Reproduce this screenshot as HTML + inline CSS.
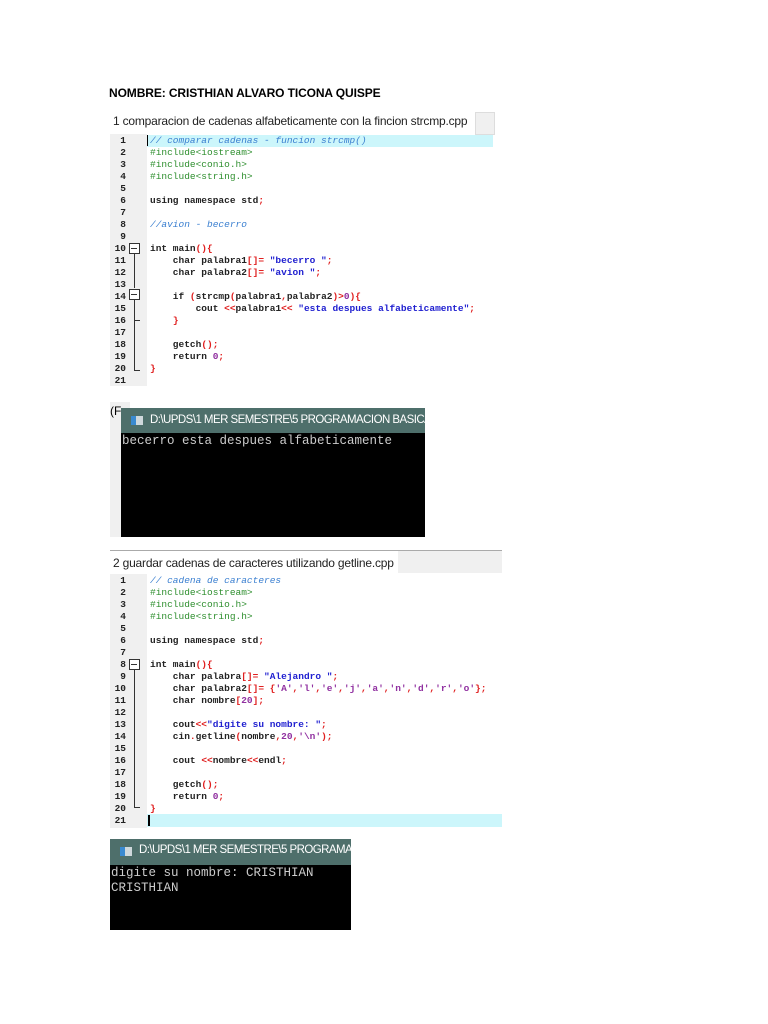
<!DOCTYPE html>
<html><head><meta charset="utf-8"><style>
body{margin:0;background:#fff;width:768px;height:1024px;position:relative;overflow:hidden;font-family:"Liberation Sans",sans-serif}
.a{position:absolute;white-space:pre}
.code{font-family:"Liberation Mono",monospace;font-size:9.5px;font-weight:bold;color:#222;line-height:12px}
.ln{font-family:"Liberation Mono",monospace;font-size:9.5px;font-weight:bold;color:#222;line-height:12px;text-align:right;width:16px}
.c{color:#3a7fd0;font-style:italic;font-weight:normal}
.p{color:#2f8f2f;font-weight:normal}
.s{color:#2020d0}
.r{color:#e02020}
.n{color:#9030a0}
.term{font-family:"Liberation Mono",monospace;color:#ccc;font-size:12.5px}
.tt{color:#fff;font-size:11.5px;letter-spacing:-0.55px}
.h{font-size:12px;letter-spacing:-0.2px;color:#222}
</style></head><body>
<div class="a" style="left:109px;top:86px;font-size:12px;font-weight:bold;letter-spacing:-0.1px">NOMBRE: CRISTHIAN ALVARO TICONA QUISPE</div>

<div class="a" style="left:475px;top:112px;width:18px;height:21px;background:#f0f0f0;border:1px solid #ddd"></div>
<div class="a h" style="left:113px;top:114px">1 comparacion de cadenas alfabeticamente con la fincion strcmp.cpp</div>
<div class="a" style="left:110px;top:134px;width:37px;height:252px;background:#f0f0f0"></div>
<div class="a" style="left:147px;top:135px;width:346px;height:12px;background:#ccf6fb"></div>
<div class="a" style="left:147px;top:135px;width:1px;height:11px;background:#000"></div>
<div class="a ln" style="left:110px;top:135px">1
2
3
4
5
6
7
8
9
10
11
12
13
14
15
16
17
18
19
20
21</div>
<div class="a" style="left:129px;top:243px;width:9px;height:9px;border:1px solid #333;background:#fff"></div>
<div class="a" style="left:131px;top:248px;width:6px;height:1px;background:#333"></div>
<div class="a" style="left:129px;top:289px;width:9px;height:9px;border:1px solid #333;background:#fff"></div>
<div class="a" style="left:131px;top:294px;width:6px;height:1px;background:#333"></div>
<div class="a" style="left:134px;top:254px;width:1px;height:34px;background:#333"></div>
<div class="a" style="left:134px;top:300px;width:1px;height:70px;background:#333"></div>
<div class="a" style="left:134px;top:320px;width:6px;height:1px;background:#333"></div>
<div class="a" style="left:134px;top:370px;width:6px;height:1px;background:#333"></div>
<div class="a code" style="left:150px;top:135px"><span class="c">// comparar cadenas - funcion strcmp()</span>
<span class="p">#include&lt;iostream&gt;</span>
<span class="p">#include&lt;conio.h&gt;</span>
<span class="p">#include&lt;string.h&gt;</span>

using namespace std<span class="r">;</span>

<span class="c">//avion - becerro</span>

int main<span class="r">(){</span>
    char palabra1<span class="r">[]=</span> <span class="s">"becerro "</span><span class="r">;</span>
    char palabra2<span class="r">[]=</span> <span class="s">"avion "</span><span class="r">;</span>

    if <span class="r">(</span>strcmp<span class="r">(</span>palabra1<span class="r">,</span>palabra2<span class="r">)&gt;</span><span class="n">0</span><span class="r">){</span>
        cout <span class="r">&lt;&lt;</span>palabra1<span class="r">&lt;&lt;</span> <span class="s">"esta despues alfabeticamente"</span><span class="r">;</span>
    <span class="r">}</span>

    getch<span class="r">();</span>
    return <span class="n">0</span><span class="r">;</span>
<span class="r">}</span>
</div>

<div class="a" style="left:110px;top:402px;width:20px;height:135px;background:#f0f0f0"></div>
<div class="a" style="left:110px;top:404px;font-size:12px">(F</div>
<div class="a" style="left:121px;top:408px;width:304px;height:129px;background:#000"></div>
<div class="a" style="left:121px;top:408px;width:304px;height:25px;background:#4e6f6b"></div>
<div class="a" style="left:131px;top:416px;width:12px;height:9px;background:#cfd8dc"></div>
<div class="a" style="left:131px;top:416px;width:5px;height:9px;background:#3a8ad0"></div>
<div class="a tt" style="left:150px;top:414px;width:275px;overflow:hidden">D:\UPDS\1 MER SEMESTRE\5 PROGRAMACION BASICA</div>
<div class="a term" style="left:122px;top:434px">becerro esta despues alfabeticamente</div>

<div class="a" style="left:110px;top:550px;width:392px;height:1px;background:#aaa"></div>
<div class="a" style="left:398px;top:551px;width:104px;height:22px;background:#f0f0f0"></div>
<div class="a h" style="left:113px;top:556px">2 guardar cadenas de caracteres utilizando getline.cpp</div>
<div class="a" style="left:110px;top:574px;width:37px;height:254px;background:#f0f0f0"></div>
<div class="a" style="left:147px;top:814px;width:355px;height:13px;background:#ccf6fb"></div>
<div class="a" style="left:148px;top:815px;width:2px;height:11px;background:#000"></div>
<div class="a ln" style="left:110px;top:575px">1
2
3
4
5
6
7
8
9
10
11
12
13
14
15
16
17
18
19
20
21</div>
<div class="a" style="left:129px;top:659px;width:9px;height:9px;border:1px solid #333;background:#fff"></div>
<div class="a" style="left:131px;top:664px;width:6px;height:1px;background:#333"></div>
<div class="a" style="left:134px;top:670px;width:1px;height:137px;background:#333"></div>
<div class="a" style="left:134px;top:807px;width:6px;height:1px;background:#333"></div>
<div class="a code" style="left:150px;top:575px"><span class="c">// cadena de caracteres</span>
<span class="p">#include&lt;iostream&gt;</span>
<span class="p">#include&lt;conio.h&gt;</span>
<span class="p">#include&lt;string.h&gt;</span>

using namespace std<span class="r">;</span>

int main<span class="r">(){</span>
    char palabra<span class="r">[]=</span> <span class="s">"Alejandro "</span><span class="r">;</span>
    char palabra2<span class="r">[]=</span> <span class="r">{</span><span class="n">'A'</span><span class="r">,</span><span class="n">'l'</span><span class="r">,</span><span class="n">'e'</span><span class="r">,</span><span class="n">'j'</span><span class="r">,</span><span class="n">'a'</span><span class="r">,</span><span class="n">'n'</span><span class="r">,</span><span class="n">'d'</span><span class="r">,</span><span class="n">'r'</span><span class="r">,</span><span class="n">'o'</span><span class="r">};</span>
    char nombre<span class="r">[</span><span class="n">20</span><span class="r">];</span>

    cout<span class="r">&lt;&lt;</span><span class="s">"digite su nombre: "</span><span class="r">;</span>
    cin<span class="r">.</span>getline<span class="r">(</span>nombre<span class="r">,</span><span class="n">20</span><span class="r">,</span><span class="n">'\n'</span><span class="r">);</span>

    cout <span class="r">&lt;&lt;</span>nombre<span class="r">&lt;&lt;</span>endl<span class="r">;</span>

    getch<span class="r">();</span>
    return <span class="n">0</span><span class="r">;</span>
<span class="r">}</span>
</div>

<div class="a" style="left:110px;top:839px;width:241px;height:91px;background:#000"></div>
<div class="a" style="left:110px;top:839px;width:241px;height:26px;background:#4e6f6b"></div>
<div class="a" style="left:120px;top:847px;width:12px;height:9px;background:#cfd8dc"></div>
<div class="a" style="left:120px;top:847px;width:5px;height:9px;background:#3a8ad0"></div>
<div class="a tt" style="left:139px;top:844px;width:212px;overflow:hidden">D:\UPDS\1 MER SEMESTRE\5 PROGRAMACION</div>
<div class="a term" style="left:111px;top:866px;line-height:15px">digite su nombre: CRISTHIAN
CRISTHIAN</div>
</body></html>
